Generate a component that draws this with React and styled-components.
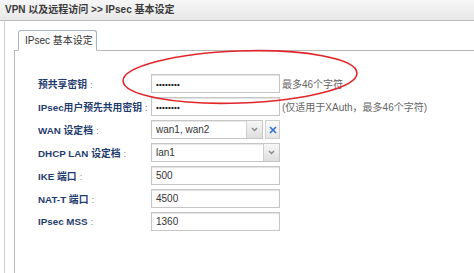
import React from "react";
import styled, { createGlobalStyle } from "styled-components";

const GlobalStyle = createGlobalStyle`
  html, body {
    margin: 0;
    padding: 0;
    background: #fff;
    font-family: "Liberation Sans", Arial, "Noto Sans CJK SC", sans-serif;
  }
`;

const rows = [
  { label: "预共享密钥", type: "password", hint: "最多46个字符" },
  { label: "IPsec用户预先共用密钥", type: "password", hint: "(仅适用于XAuth，最多46个字符)" },
  { label: "WAN 设定档", type: "multi", value: "wan1, wan2" },
  { label: "DHCP LAN 设定档", type: "select", value: "lan1" },
  { label: "IKE 端口", type: "text", value: "500" },
  { label: "NAT-T 端口", type: "text", value: "4500" },
  { label: "IPsec MSS", type: "text", value: "1360" },
];

function Chevron() {
  return (
    <svg width="7" height="5" viewBox="0 0 7 5">
      <path d="M1 1 L3.5 3.5 L6 1" fill="none" stroke="#888" strokeWidth="1.4" />
    </svg>
  );
}

function Cross() {
  return (
    <svg width="8" height="8" viewBox="0 0 8 8">
      <path d="M1 1 L7 7 M7 1 L1 7" fill="none" stroke="#2f6fd6" strokeWidth="1.6" />
    </svg>
  );
}

function Field({ row }) {
  if (row.type === "password") {
    return (
      <>
        <Input>
          <Dots>••••••••</Dots>
        </Input>
        <Hint>{row.hint}</Hint>
      </>
    );
  }
  if (row.type === "multi") {
    return (
      <>
        <Select narrow>
          <SelectText>{row.value}</SelectText>
          <ArrowBtn><Chevron /></ArrowBtn>
        </Select>
        <ClearBtn><Cross /></ClearBtn>
      </>
    );
  }
  if (row.type === "select") {
    return (
      <Select>
        <SelectText>{row.value}</SelectText>
        <ArrowBtn><Chevron /></ArrowBtn>
      </Select>
    );
  }
  return <Input>{row.value}</Input>;
}

export default function App() {
  return (
    <Page>
      <GlobalStyle />
      <Header>VPN 以及远程访问 &gt;&gt; IPsec 基本设定</Header>
      <Outer>
        <Section>
          <TabBar>
            <Tab>IPsec 基本设定</Tab>
          </TabBar>
          <Panel>
            {rows.map((row) => (
              <Row key={row.label}>
                <Label>
                  {row.label}
                  <Colon>:</Colon>
                </Label>
                <Field row={row} />
              </Row>
            ))}
          </Panel>
        </Section>
      </Outer>
      <Annotation width="474" height="273" viewBox="0 0 474 273">
        <ellipse
          cx="240"
          cy="77"
          rx="117"
          ry="26"
          transform="rotate(-2 240 77)"
          fill="none"
          stroke="#e0262b"
          strokeWidth="1.6"
        />
      </Annotation>
    </Page>
  );
}

const Page = styled.div`
  position: relative;
  width: 474px;
  height: 273px;
  overflow: hidden;
  display: flex;
  flex-direction: column;
`;

const Header = styled.div`
  height: 20px;
  line-height: 20px;
  padding-left: 5px;
  background: linear-gradient(#f6f6f6, #e8e8e8);
  border-bottom: 1px solid #bdbdbd;
  font-size: 10px;
  font-weight: bold;
  color: #3a3a3a;
  white-space: nowrap;
`;

const Outer = styled.div`
  flex: 1;
  margin-left: 4px;
  border-left: 1px solid #cfcfcf;
  padding: 9px 0 0 9px;
  display: flex;
`;

const Section = styled.div`
  flex: 1;
  display: flex;
  flex-direction: column;
`;

const TabBar = styled.div`
  display: flex;
  padding-left: 4px;
  border-bottom: 1px solid #b8b8b8;
`;

const Tab = styled.div`
  width: 71px;
  height: 19px;
  line-height: 20px;
  padding-left: 6px;
  margin-bottom: -1px;
  border: 1px solid #a9b4c2;
  border-bottom: 1px solid #fff;
  border-radius: 3px 3px 0 0;
  background: linear-gradient(#fbfbfb, #fff);
  font-size: 10px;
  color: #333;
  white-space: nowrap;
`;

const Panel = styled.div`
  flex: 1;
  border-left: 1px solid #b8b8b8;
  padding: 23px 0 0 23px;
  display: flex;
  flex-direction: column;
  gap: 4px;
`;

const Row = styled.div`
  display: flex;
  align-items: center;
  height: 19px;
`;

const Label = styled.div`
  width: 113px;
  flex-shrink: 0;
  font-size: 9.8px;
  font-weight: bold;
  color: #1f3c6e;
  white-space: nowrap;
`;

const Colon = styled.span`
  margin-left: 3px;
  font-weight: normal;
  color: #8a8a8a;
`;

const Input = styled.div`
  box-sizing: border-box;
  width: 129px;
  height: 19px;
  border: 1px solid #c6c6c6;
  box-shadow: inset 0 1px 1px rgba(0, 0, 0, 0.12);
  padding-left: 4px;
  line-height: 18px;
  font-size: 10px;
  color: #333;
`;

const Dots = styled.span`
  font-size: 8px;
  font-weight: bold;
  letter-spacing: 0.2px;
  color: #222;
`;

const Hint = styled.span`
  margin-left: 2px;
  font-size: 10px;
  color: #666;
  white-space: nowrap;
`;

const Select = styled.div`
  box-sizing: border-box;
  width: ${(p) => (p.narrow ? "112px" : "129px")};
  height: 19px;
  border: 1px solid #c6c6c6;
  box-shadow: inset 0 1px 1px rgba(0, 0, 0, 0.1);
  display: flex;
`;

const SelectText = styled.div`
  flex: 1;
  padding-left: 4px;
  line-height: 17px;
  font-size: 10px;
  color: #333;
`;

const ArrowBtn = styled.div`
  width: 15px;
  border-left: 1px solid #cdcdcd;
  background: linear-gradient(#f7f7f7, #dedede);
  display: flex;
  align-items: center;
  justify-content: center;
`;

const ClearBtn = styled.div`
  box-sizing: border-box;
  width: 15px;
  height: 19px;
  margin-left: 2px;
  border: 1px solid #cfcfcf;
  background: linear-gradient(#fafafa, #e6e6e6);
  display: flex;
  align-items: center;
  justify-content: center;
`;

const Annotation = styled.svg`
  position: absolute;
  top: 0;
  left: 0;
  pointer-events: none;
`;
